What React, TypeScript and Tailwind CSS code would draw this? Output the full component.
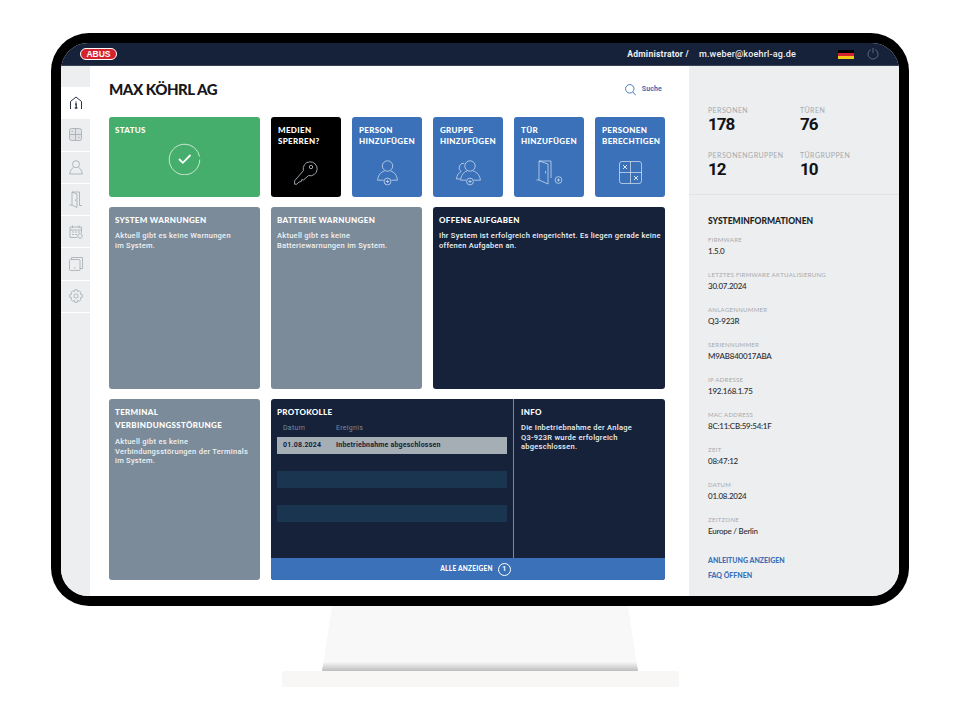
import React from 'react';

const iconClass = 'fill-none stroke-current';

const HouseInfo = () => (
	<svg width="14" height="14" viewBox="0 0 14 14" className={ iconClass } strokeWidth="1">
		<path d="M1.5 13 V5.5 L7 1 L12.5 5.5 V13" />
		<path d="M7 5.5 V6.5 M6 8 H7.2 V12 M5.8 12 H8.4" strokeWidth="1.3" />
	</svg>
);

const Panels = () => (
	<svg width="13" height="13" viewBox="0 0 13 13" className={ iconClass } strokeWidth="0.8">
		<rect x="0.5" y="0.5" width="12" height="12" rx="2" className="fill-[#e0e2e5]" />
		<path d="M6.5 0.5 V12.5 M0.5 6.5 H12.5" />
		<path d="M2.5 3.5 H4 M9 9.5 H10.5" />
	</svg>
);

const User = () => (
	<svg width="14" height="15" viewBox="0 0 14 15" className={ iconClass } strokeWidth="0.8">
		<circle cx="7" cy="4.2" r="3.5" />
		<path d="M4.5 7.5 C2.5 8.5 1 11 0.7 14 H13.3 C13 11 11.5 8.5 9.5 7.5" />
	</svg>
);

const Door = () => (
	<svg width="13" height="17" viewBox="0 0 13 17" className={ iconClass } strokeWidth="0.8">
		<path d="M3 14 V1 H10.5 V14.5 M3 1 L8 3 V16.5 L3 14 H0.5 M10.5 14.5 H13" />
		<path d="M6.5 8.5 V10" />
	</svg>
);

const CalendarIcon = () => (
	<svg width="14" height="14" viewBox="0 0 14 14" className={ iconClass } strokeWidth="0.8">
		<path d="M8 12.5 H1 V2 H12.5 V8" />
		<path d="M1 5 H12.5 M3.5 0.5 V3 M10 0.5 V3 M3 7 H5 M6 7 H8 M9 7 H11 M3 9.5 H5 M6 9.5 H8" />
		<circle cx="11" cy="11" r="2.3" />
	</svg>
);

const Cards = () => (
	<svg width="14" height="14" viewBox="0 0 14 14" className={ iconClass } strokeWidth="0.8">
		<rect x="0.5" y="2.5" width="10.5" height="11" rx="1" />
		<path d="M2.5 2.5 V0.5 H13.5 V11.5 H11" />
		<path d="M5 11 H6.5" />
	</svg>
);

const Gear = () => (
	<svg width="14" height="14" viewBox="0 0 14 14" className={ iconClass } strokeWidth="0.8">
		<path d="M5.8 0.7 H8.2 L8.7 2.6 L10.3 1.7 L12 3.4 L11.1 5 L13.3 5.7 V8.2 L11.2 8.9 L12.1 10.5 L10.4 12.2 L8.7 11.3 L8.2 13.3 H5.8 L5.3 11.3 L3.6 12.2 L1.9 10.5 L2.8 8.9 L0.7 8.2 V5.7 L2.9 5 L2 3.4 L3.7 1.7 L5.3 2.6 Z" />
		<circle cx="7" cy="7" r="2.1" />
	</svg>
);

const SearchIcon = () => (
	<svg width="11" height="12" viewBox="0 0 12 13" className={ iconClass } strokeWidth="1">
		<circle cx="5.2" cy="5.2" r="4.6" />
		<path d="M8.6 8.6 L11.6 12.3" />
	</svg>
);

const PowerIcon = () => (
	<svg width="12" height="12" viewBox="0 0 12 12" className={ iconClass } strokeWidth="0.8">
		<path d="M3.8 1.6 A5 5 0 1 0 8.2 1.6" />
		<path d="M6 0 V5" />
	</svg>
);

const StatusCheck = () => (
	<svg width="33" height="33" viewBox="0 0 33 33" className={ iconClass }>
		<path d="M31.5 14.5 A15.3 15.3 0 1 0 31.8 17.5" strokeWidth="0.7" />
		<path d="M11 17 L14.8 20.8 L22.5 13" strokeWidth="1.8" />
	</svg>
);

const KeyIcon = () => (
	<svg width="24" height="25" viewBox="0 0 24 25" className={ iconClass } strokeWidth="0.7">
		<path d="M9.4 10.6 A7 7 0 1 1 14.5 15.6 L9.5 20 L7.8 19.6 L7.2 21.6 L5 22 L2.8 24.2 H0.6 V20.8 Z" />
		<circle cx="17" cy="7" r="1.7" />
	</svg>
);

const AddBadge = ({ cx, cy }: { cx: number, cy: number }) => (
	<>
		<circle cx={ cx } cy={ cy } r="3.4" />
		<path d={ `M${ cx - 1.6 } ${ cy } H${ cx + 1.6 } M${ cx } ${ cy - 1.6 } V${ cy + 1.6 }` } />
	</>
);

const PersonAdd = () => (
	<svg width="21" height="26" viewBox="0 0 21 26" className={ iconClass } strokeWidth="0.7">
		<circle cx="10.5" cy="6" r="5.2" />
		<path d="M7.5 11 C3.5 12 1 15.5 0.6 20.2 H6.7 M14.3 20.2 H20.4 C20 15.5 17.5 12 13.5 11" />
		<AddBadge cx={ 10.5 } cy={ 21.5 } />
	</svg>
);

const GroupAdd = () => (
	<svg width="25" height="26" viewBox="0 0 25 26" className={ iconClass } strokeWidth="0.7">
		<circle cx="14" cy="6" r="5.2" />
		<path d="M8.2 3.2 A4.6 4.6 0 0 0 5 11.5 C2.5 13 0.8 15.5 0.5 19 H4.5" />
		<path d="M11 11 C7.5 12 5 15.5 4.6 20.2 H10.3 M17.8 20.2 H24.4 C24 15.5 21 12 17 11" />
		<AddBadge cx={ 14 } cy={ 21.5 } />
	</svg>
);

const DoorAdd = () => (
	<svg width="27" height="25" viewBox="0 0 27 25" className={ iconClass } strokeWidth="0.7">
		<path d="M3 20 V1 H15 V18 M3 1 L12 4 V24 L3 20 H0.5" />
		<path d="M9.5 11 V13.5" />
		<AddBadge cx={ 22.5 } cy={ 20 } />
	</svg>
);

const GridCross = () => (
	<svg width="23" height="23" viewBox="0 0 23 23" className={ iconClass } strokeWidth="0.7">
		<rect x="0.5" y="0.5" width="22" height="22" rx="2.5" />
		<path d="M11.5 0.5 V22.5 M0.5 11.5 H22.5" />
		<path d="M4 4 L8 8 M8 4 L4 8 M15 15 L19 19 M19 15 L15 19" strokeWidth="1" />
	</svg>
);

const navItems = [ <HouseInfo />, <Panels />, <User />, <Door />, <CalendarIcon />, <Cards />, <Gear /> ];

const actionTiles = [
	{ lines: [ 'MEDIEN', 'SPERREN?' ], icon: <KeyIcon />, bg: 'bg-black' },
	{ lines: [ 'PERSON', 'HINZUFÜGEN' ], icon: <PersonAdd />, bg: 'bg-[#3b71b8]' },
	{ lines: [ 'GRUPPE', 'HINZUFÜGEN' ], icon: <GroupAdd />, bg: 'bg-[#3b71b8]' },
	{ lines: [ 'TÜR', 'HINZUFÜGEN' ], icon: <DoorAdd />, bg: 'bg-[#3b71b8]' },
	{ lines: [ 'PERSONEN', 'BERECHTIGEN' ], icon: <GridCross />, bg: 'bg-[#3b71b8]' },
];

const systemInfo = [
	[ 'FIRMWARE', '1.5.0' ],
	[ 'LETZTES FIRMWARE AKTUALISIERUNG', '30.07.2024' ],
	[ 'ANLAGENNUMMER', 'Q3-923R' ],
	[ 'SERIENNUMMER', 'M9AB840017ABA' ],
	[ 'IP ADRESSE', '192.168.1.75' ],
	[ 'MAC ADDRESS', '8C:11:CB:59:54:1F' ],
	[ 'ZEIT', '08:47:12' ],
	[ 'DATUM', '01.08.2024' ],
	[ 'ZEITZONE', 'Europe / Berlin' ],
];

const stats = [
	[ 'PERSONEN', '178' ],
	[ 'TÜREN', '76' ],
	[ 'PERSONENGRUPPEN', '12' ],
	[ 'TÜRGRUPPEN', '10' ],
];

const CardTitle = ({ children }: { children: React.ReactNode }) => (
	<h2 className="whitespace-nowrap font-['Lato',sans-serif] text-[8px] leading-[11px] font-black tracking-[0.04em] text-white">{ children }</h2>
);

const BodyText = ({ children }: { children: React.ReactNode }) => (
	<p className="whitespace-nowrap text-[7.5px] leading-[9.7px] font-medium tracking-[0.035em] text-[#eef1f3]">{ children }</p>
);

const App: React.FC = () => {
	return (
		<div className="flex h-[720px] w-[960px] flex-col items-center overflow-hidden bg-white pt-[33px] font-['Roboto',sans-serif]">
			<div className="h-[573px] w-[858px] shrink-0 rounded-[38px] bg-black p-[10px]">
				<div className="flex h-full flex-col overflow-hidden rounded-[27px] bg-white">
					<header className="flex h-[23px] shrink-0 items-center justify-between border-b border-[#3a4354] bg-[#16213a] pl-[19px] pr-[20px]">
						<div className="flex h-[12px] w-[37px] items-center justify-center rounded-full border border-white bg-[#d3232c] font-['Liberation_Sans',sans-serif] text-[8.5px] leading-none font-bold text-white">ABUS</div>
						<div className="flex items-center">
							<span className="pt-[1px] text-[8.5px] font-bold tracking-[0.03em] text-[#eef1f3]">Administrator /</span>
							<span className="ml-[10px] pt-[1px] text-[9px] font-medium tracking-[0.02em] text-[#eef1f3]">m.weber@koehrl-ag.de</span>
							<div className="ml-[42px] flex h-[9px] w-[16px] flex-col">
								<div className="flex-1 bg-black" />
								<div className="flex-1 bg-[#d3232c]" />
								<div className="flex-1 bg-[#f5c518]" />
							</div>
							<div className="ml-[13px] text-[#6f7787]"><PowerIcon /></div>
						</div>
					</header>

					<div className="flex min-h-0 flex-1">
						<aside className="flex w-[29px] shrink-0 flex-col bg-[#eceef0]">
							<div className="h-[21px] shrink-0" />
							{ navItems.map((icon, i) => (
								<div
									key={ i }
									className={ i === 0
										? 'flex h-[32.3px] items-center justify-center bg-white text-[#2a3347]'
										: 'flex h-[32.3px] items-center justify-center border-b border-white text-[#a3a9b0]' }
								>
									{ icon }
								</div>
							)) }
						</aside>

						<main className="flex-1 pl-[19px] pr-[24px]">
							<div className="mb-[5px] flex h-[46px] items-center justify-between pt-[1px]">
								<h1 className="font-['Lato',sans-serif] text-[15px] font-black tracking-[-0.03em] text-[#17171c]">MAX KÖHRL AG</h1>
								<div className="flex items-center gap-[6px] pr-[3px] text-[#3b71b8]">
									<SearchIcon />
									<span className="text-[7px] font-bold tracking-[0.02em]">Suche</span>
								</div>
							</div>

							<div className="grid grid-cols-7 grid-rows-[80px_182px_181px] gap-x-[11px] gap-y-[10px]">
								<div className="col-span-2 flex flex-col rounded-[3px] bg-[#45ae6c] px-[6px] pt-[8px]">
									<CardTitle>STATUS</CardTitle>
									<div className="mt-[6px] flex justify-center text-white"><StatusCheck /></div>
								</div>

								{ actionTiles.map((tile) => (
									<div key={ tile.lines[1] } className={ `flex flex-col rounded-[3px] px-[7px] pt-[8px] ${ tile.bg }` }>
										<CardTitle>
											{ tile.lines[0] }<br />{ tile.lines[1] }
										</CardTitle>
										<div className="flex flex-1 items-center justify-center pt-[5px] pb-[4px] text-[#dbe6f4]">{ tile.icon }</div>
									</div>
								)) }

								<div className="col-span-2 rounded-[3px] bg-[#7b8b99] px-[6px] pt-[8px]">
									<CardTitle>SYSTEM WARNUNGEN</CardTitle>
									<div className="mt-[5px]"><BodyText>Aktuell gibt es keine Warnungen<br />im System.</BodyText></div>
								</div>
								<div className="col-span-2 rounded-[3px] bg-[#7b8b99] px-[6px] pt-[8px]">
									<CardTitle>BATTERIE WARNUNGEN</CardTitle>
									<div className="mt-[5px]"><BodyText>Aktuell gibt es keine<br />Batteriewarnungen im System.</BodyText></div>
								</div>
								<div className="col-span-3 rounded-[3px] bg-[#16213a] px-[6px] pt-[8px]">
									<CardTitle>OFFENE AUFGABEN</CardTitle>
									<div className="mt-[5px]"><BodyText>Ihr System ist erfolgreich eingerichtet. Es liegen gerade keine<br />offenen Aufgaben an.</BodyText></div>
								</div>

								<div className="col-span-2 rounded-[3px] bg-[#7b8b99] px-[6px] pt-[7px]">
									<h2 className="font-['Lato',sans-serif] text-[8px] leading-[13px] font-black tracking-[0.04em] text-white">TERMINAL<br />VERBINDUNGSSTÖRUNGE</h2>
									<div className="mt-[5px]"><BodyText>Aktuell gibt es keine<br />Verbindungsstörungen der Terminals<br />im System.</BodyText></div>
								</div>

								<div className="col-span-5 flex flex-col overflow-hidden rounded-[3px] bg-[#16213a]">
									<div className="flex min-h-0 flex-1">
										<div className="w-[243px] border-r border-[#7b8b99] px-[6px] pt-[7px]">
											<div className="pt-[1px]"><CardTitle>PROTOKOLLE</CardTitle></div>
											<div className="mt-[5px] flex h-[10px] items-center pl-[6px] text-[7px] tracking-[0.04em] text-[#7b8b99]">
												<span className="w-[53px]">Datum</span>
												<span>Ereignis</span>
											</div>
											<div className="mt-[4px] flex h-[17px] items-center bg-[#a5aeb5] pl-[6px] text-[7px] font-bold tracking-[0.03em] text-[#16213a]">
												<span className="w-[53px]">01.08.2024</span>
												<span>Inbetriebnahme abgeschlossen</span>
											</div>
											<div className="mt-[17px] h-[17px] bg-[#1a3550]" />
											<div className="mt-[17px] h-[17px] bg-[#1a3550]" />
										</div>
										<div className="flex-1 px-[7px] pt-[8px]">
											<CardTitle>INFO</CardTitle>
											<div className="mt-[5px]"><BodyText>Die Inbetriebnahme der Anlage<br />Q3-923R wurde erfolgreich<br />abgeschlossen.</BodyText></div>
										</div>
									</div>
									<div className="flex h-[22px] shrink-0 items-center justify-center bg-[#3b71b8] pl-[15px]">
										<span className="font-['Lato',sans-serif] text-[6.5px] font-black tracking-[0.04em] text-white">ALLE ANZEIGEN</span>
										<span className="ml-[5px] flex h-[13px] w-[13px] items-center justify-center rounded-full border border-white text-[7px] font-bold text-white">1</span>
									</div>
								</div>
							</div>
						</main>

						<aside className="w-[210px] shrink-0 bg-[#eceef0]">
							<div className="grid grid-cols-[92px_1fr] gap-y-[17px] border-b border-[#e0e2e5] pl-[19px] pt-[39px] pb-[16px]">
								{ stats.map(([ label, value ]) => (
									<div key={ label }>
										<div className="font-['Lato',sans-serif] text-[7px] leading-[10px] tracking-[0.06em] text-[#a6aaae]">{ label }</div>
										<div className="text-[17px] leading-[18px] font-bold tracking-[-0.06em] text-[#111318]">{ value }</div>
									</div>
								)) }
							</div>
							<div className="pl-[19px] pt-[20px]">
								<h2 className="mb-[8px] font-['Lato',sans-serif] text-[8.5px] leading-[12px] font-black text-[#1b1d24]">SYSTEMINFORMATIONEN</h2>
								{ systemInfo.map(([ label, value ]) => (
									<div key={ label } className="h-[35px]">
										<div className="font-['Lato',sans-serif] text-[6px] leading-[10px] tracking-[0.05em] text-[#a6aaae]">{ label }</div>
										<div className="font-['Lato',sans-serif] text-[8px] leading-[12px] font-medium tracking-[-0.03em] text-[#2b2d33]">{ value }</div>
									</div>
								)) }
								<div className="mt-[3px] font-['Lato',sans-serif] text-[7px] leading-[15px] font-black text-[#3b71b8]">
									<div>ANLEITUNG ANZEIGEN</div>
									<div>FAQ ÖFFNEN</div>
								</div>
							</div>
						</aside>
					</div>
				</div>
			</div>

			<div className="flex h-[65px] w-[316px] shrink-0 flex-col justify-end bg-[#f8f8f8] [clip-path:polygon(3.2%_0,96.8%_0,100%_100%,0_100%)]">
				<div className="h-[9px] bg-gradient-to-b from-[#f8f8f8] to-[#bdbdbd]" />
			</div>
			<div className="h-[16px] w-[397px] shrink-0 rounded-[2px] bg-[#f8f7f6]" />
		</div>
	);
};

export default App;
